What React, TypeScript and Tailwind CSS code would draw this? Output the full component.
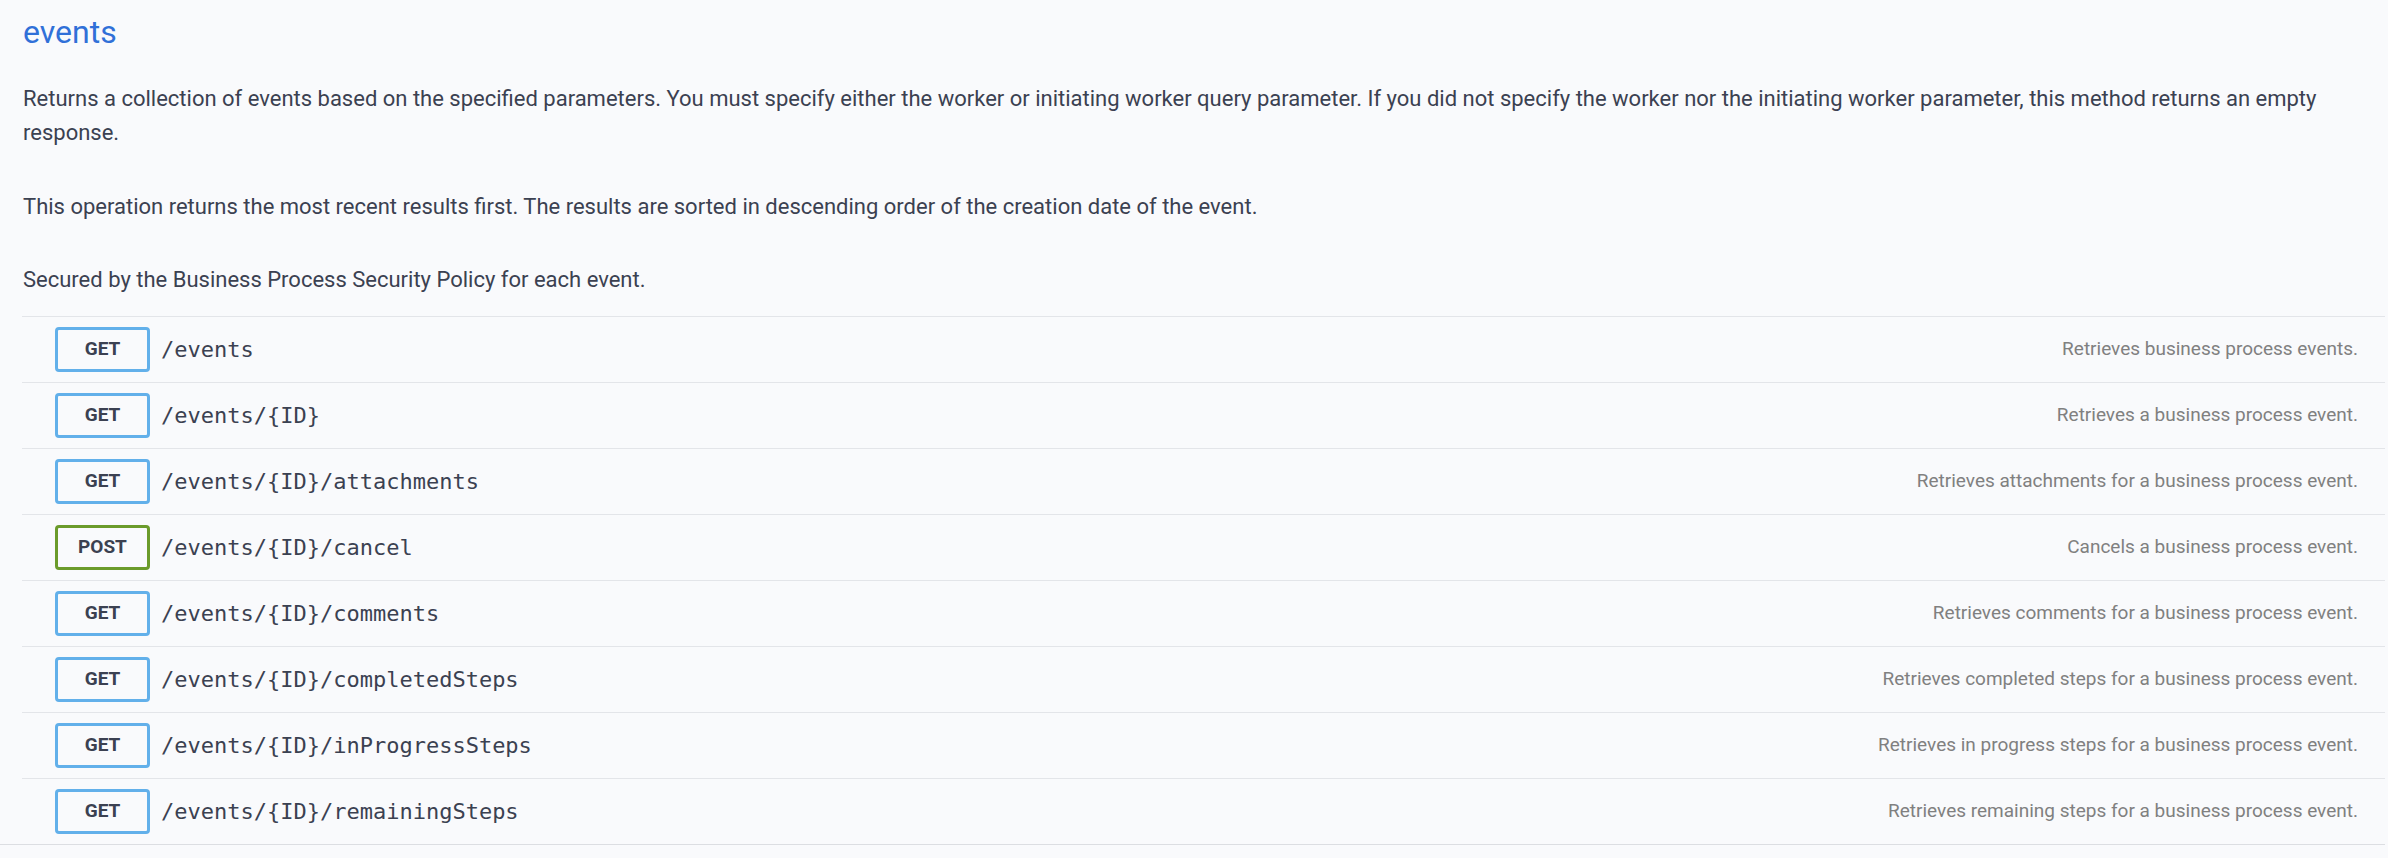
import React from 'react';

type Endpoint = {
  method: 'GET' | 'POST';
  path: string;
  summary: string;
};

const endpoints: Endpoint[] = [
  { method: 'GET', path: '/events', summary: 'Retrieves business process events.' },
  { method: 'GET', path: '/events/{ID}', summary: 'Retrieves a business process event.' },
  { method: 'GET', path: '/events/{ID}/attachments', summary: 'Retrieves attachments for a business process event.' },
  { method: 'POST', path: '/events/{ID}/cancel', summary: 'Cancels a business process event.' },
  { method: 'GET', path: '/events/{ID}/comments', summary: 'Retrieves comments for a business process event.' },
  { method: 'GET', path: '/events/{ID}/completedSteps', summary: 'Retrieves completed steps for a business process event.' },
  { method: 'GET', path: '/events/{ID}/inProgressSteps', summary: 'Retrieves in progress steps for a business process event.' },
  { method: 'GET', path: '/events/{ID}/remainingSteps', summary: 'Retrieves remaining steps for a business process event.' },
];

const MethodBadge: React.FC<{ method: Endpoint['method'] }> = ({ method }) => (
  <span
    className={
      method === 'POST'
        ? 'flex h-[45px] w-[95px] shrink-0 items-center justify-center rounded-[4px] border-[3px] border-[#6b9b2b] text-[19px] font-bold text-[#3b4151]'
        : 'flex h-[45px] w-[95px] shrink-0 items-center justify-center rounded-[4px] border-[3px] border-[#62b0ea] text-[19px] font-bold text-[#3b4151]'
    }
  >
    {method}
  </span>
);

const EndpointRow: React.FC<{ item: Endpoint }> = ({ item }) => (
  <div className="flex h-[66px] items-center border-t border-[#e3e5e9] pl-[33px] pr-[27px]">
    <MethodBadge method={item.method} />
    <span className="ml-[11px] font-['DejaVu_Sans_Mono',monospace] text-[22px] text-[#3b4151]">{item.path}</span>
    <span className="ml-auto text-[19px] text-[#808080]">{item.summary}</span>
  </div>
);

const App: React.FC = () => {
  return (
    <div className="min-h-screen bg-[#f9fafc] font-['Roboto',sans-serif] text-[#3b4151]">
      <div className="mr-[3px] border-b border-[#dcdee2]">
        <div className="px-[23px] pt-[12px]">
          <h2 className="text-[32px] leading-[40px] text-[#3070d8]">events</h2>
          <div className="mt-[30px] pr-[10px] text-[22px] leading-[34px]">
            <p>
              Returns a collection of events based on the specified parameters. You must specify either the worker or
              initiating worker query parameter. If you did not specify the worker nor the initiating worker parameter, this
              method returns an empty response.
            </p>
            <p className="mt-[40px]">
              This operation returns the most recent results first. The results are sorted in descending order of the creation
              date of the event.
            </p>
            <p className="mt-[39px]">Secured by the Business Process Security Policy for each event.</p>
          </div>
        </div>
        <div className="ml-[22px] mt-[19px]">
          {endpoints.map((e) => (
            <EndpointRow key={e.path} item={e} />
          ))}
        </div>
      </div>
    </div>
  );
};

export default App;
